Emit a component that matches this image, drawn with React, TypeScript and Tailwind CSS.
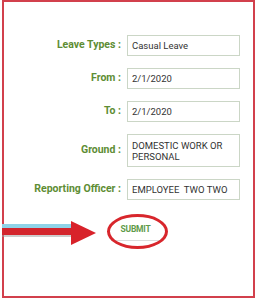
import React from 'react'

const rows: { label: string; value: string[]; tall?: boolean }[] = [
  { label: 'Leave Types :', value: ['Casual Leave'] },
  { label: 'From :', value: ['2/1/2020'] },
  { label: 'To :', value: ['2/1/2020'] },
  { label: 'Ground :', value: ['DOMESTIC WORK OR', 'PERSONAL'], tall: true },
  { label: 'Reporting Officer :', value: ['EMPLOYEE\u00a0 TWO TWO'] },
]

export default function App() {
  return (
    <div className="w-[256px] h-[300px] bg-white" style={{ fontFamily: 'Roboto, "Liberation Sans", sans-serif' }}>
      <div className="relative ml-[2px] w-[253px] h-[298px] border-2 border-[#d2404c] bg-white">
        <div className="flex flex-col gap-[12px] pt-[33px]">
          {rows.map((r) => (
            <div key={r.label} className="flex items-center">
              <div className="w-[117px] text-right text-[10.5px] font-bold text-[#5e8d34] leading-none">{r.label}</div>
              <div
                className={
                  'ml-[6px] w-[113px] border border-[#cbd6c6] px-[4px] text-[9.5px] text-[#333] leading-[11px] flex flex-col justify-center ' +
                  (r.tall ? 'h-[33px]' : 'h-[21px]')
                }
              >
                {r.value.map((v) => (
                  <span key={v}>{v}</span>
                ))}
              </div>
            </div>
          ))}
        </div>

        <div className="mt-[19px] flex justify-center pl-[14px]">
          <button className="px-[9px] pt-[6px] pb-[6px] text-[8.5px] font-bold text-[#5f9b4a] tracking-tight border-b border-[#dcdcdc] leading-none">
            SUBMIT
          </button>
        </div>

        {/* annotation: ellipse */}
        <div className="absolute left-[103px] top-[212px] w-[61px] h-[35px] rounded-[50%] border-[3.5px] border-[#d8262c]" />

        {/* annotation: arrow */}
        <svg className="absolute left-[-2px] top-[216px]" width="96" height="30" viewBox="0 0 96 30">
          <rect x="0" y="6" width="72" height="4" fill="#8fd3e8" />
          <rect x="0" y="16" width="72" height="3" fill="#9a9a9a" opacity="0.5" />
          <rect x="0" y="10" width="72" height="7" fill="#d3242c" />
          <polygon points="69,3 94,15 69,27" fill="#d8222a" />
        </svg>
      </div>
    </div>
  )
}
